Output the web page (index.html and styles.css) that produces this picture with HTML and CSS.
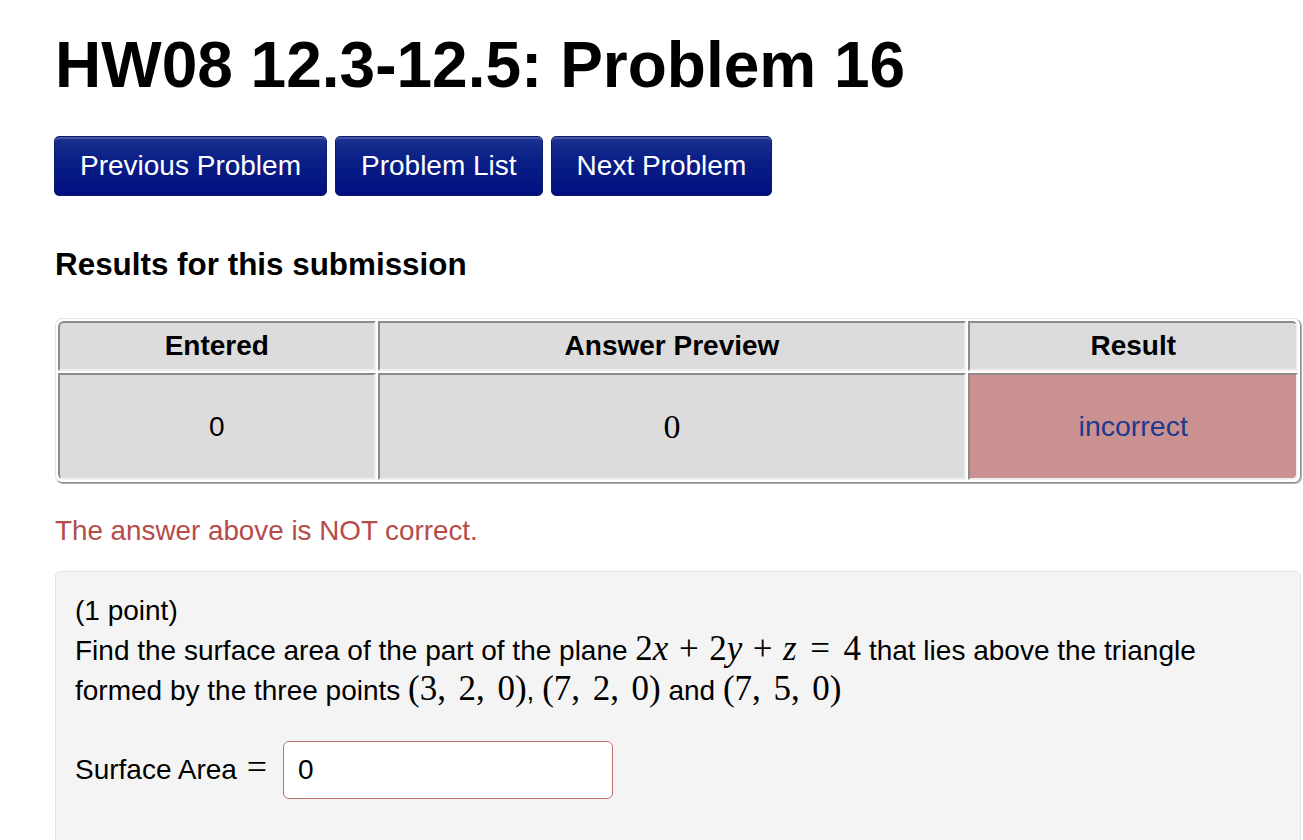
FILE: index.html
```html
<!DOCTYPE html>
<html>
<head>
<meta charset="utf-8">
<title>HW08 12.3-12.5: Problem 16</title>
<link rel="stylesheet" href="styles.css">
</head>
<body>
<div class="page">
  <h1 class="title">HW08 12.3-12.5: Problem 16</h1>
  <div class="nav">
    <a class="btn" href="#">Previous Problem</a>
    <a class="btn" href="#">Problem List</a>
    <a class="btn" href="#">Next Problem</a>
  </div>
  <h2 class="results-head">Results for this submission</h2>
  <table class="attempts">
    <tr>
      <th class="c1 tl">Entered</th>
      <th class="c2">Answer Preview</th>
      <th class="c3 tr">Result</th>
    </tr>
    <tr>
      <td class="c1 bl">0</td>
      <td class="c2 math-cell">0</td>
      <td class="c3 incorrect br">incorrect</td>
    </tr>
  </table>
  <p class="not-correct">The answer above is NOT correct.</p>
  <div class="problem">
    <p class="statement">(1 point)<br>Find the surface area of the part of the plane <span class="math"><span class="mn">2</span><span class="mi">x</span><span class="mo">+</span><span class="mn">2</span><span class="mi">y</span><span class="mo">+</span><span class="mi">z</span><span class="mrel">=</span><span class="mn">4</span></span> that lies above the triangle formed by the three points <span class="math">(3,<span class="sp"></span>2,<span class="sp"></span>0)</span>, <span class="math">(7,<span class="sp"></span>2,<span class="sp"></span>0)</span> and <span class="math">(7,<span class="sp"></span>5,<span class="sp"></span>0)</span></p>
    <div class="answer-row">
      <span class="label">Surface Area <span class="math eq">=</span></span>
      <input class="answer" type="text" value="0">
    </div>
  </div>
</div>
</body>
</html>
```

FILE: styles.css
```css
html, body {
  margin: 0;
  padding: 0;
  background: #ffffff;
}

body {
  font-family: "Liberation Sans", Arial, Helvetica, sans-serif;
  color: #000;
}

.page {
  margin-left: 55px;
  width: 1246px;
}

.title {
  font-size: 64px;
  line-height: 80px;
  font-weight: bold;
  margin: 25px 0 0 0;
}

.nav {
  display: flex;
  gap: 8px;
  margin-top: 31px;
  margin-left: -1px;
}

.btn {
  display: flex;
  align-items: center;
  height: 58px;
  padding: 0 25px;
  font-size: 28px;
  color: #fff;
  text-decoration: none;
  background: linear-gradient(#1c3290 0%, #0a1f86 40%, #000f80 100%);
  border: 1px solid #0b1b6c;
  border-radius: 5px;
  box-shadow: inset 0 2px 0 rgba(255,255,255,0.18);
}

.results-head {
  font-size: 31.4px;
  line-height: 36px;
  font-weight: bold;
  margin: 51px 0 0 0;
}

.attempts {
  margin-top: 35px;
  width: 1246px;
  border-collapse: separate;
  border-spacing: 2px;
  border: 1px solid;
  border-color: #e4e4e4 #8c8c8c #8c8c8c #e4e4e4;
  border-radius: 7px;
  box-shadow: 1px 1px 0 #b0b0b0;
}

.attempts th,
.attempts td {
  background: #dcdcdc;
  border: 2px solid;
  border-color: #8c8c8c #f0f0f0 #f0f0f0 #8c8c8c;
  text-align: center;
  padding: 0;
}

.attempts th {
  font-size: 28px;
  font-weight: bold;
  height: 46px;
}

.attempts td {
  font-size: 28px;
  height: 103px;
}

.attempts .c1 { width: 313px; }
.attempts .c2 { width: 584px; }
.attempts .c3 { width: 325px; }

.attempts .tl { border-top-left-radius: 6px; }
.attempts .tr { border-top-right-radius: 6px; }
.attempts .bl { border-bottom-left-radius: 6px; }
.attempts .br { border-bottom-right-radius: 6px; }

.attempts .math-cell {
  font-family: "Liberation Serif", "Times New Roman", serif;
  font-size: 34px;
}

.attempts .incorrect {
  background: #ca9190;
  color: #1d3a8c;
  font-size: 28.5px;
}

.not-correct {
  font-size: 27.8px;
  line-height: 40px;
  color: #b54c4a;
  margin: 28px 0 0 0;
}

.problem {
  margin-top: 20px;
  background: #f4f4f4;
  border: 1px solid #e2e2e2;
  border-radius: 5px;
  padding: 19px 19px 40px 19px;
  min-height: 250px;
}

.statement {
  font-size: 28px;
  line-height: 40px;
  margin: 0;
}

.math {
  font-family: "Liberation Serif", "Times New Roman", serif;
  font-size: 35px;
  line-height: 1;
}

.mi {
  font-style: italic;
}

.mo {
  margin: 0 0.3em;
}

.mrel {
  margin: 0 0.39em;
}

.sp {
  display: inline-block;
  width: 0.36em;
}

.answer-row {
  display: flex;
  align-items: center;
  gap: 16px;
  margin-top: 30px;
}

.label {
  font-size: 28px;
}

.label .eq {
  font-size: 36px;
  line-height: 20px;
  margin-left: 2px;
}

.answer {
  box-sizing: border-box;
  width: 330px;
  height: 58px;
  border: 1px solid #c27272;
  border-radius: 6px;
  background: #fff;
  padding: 0 14px;
  font-family: "Liberation Sans", Arial, sans-serif;
  font-size: 28px;
  color: #000;
  outline: none;
}
```
